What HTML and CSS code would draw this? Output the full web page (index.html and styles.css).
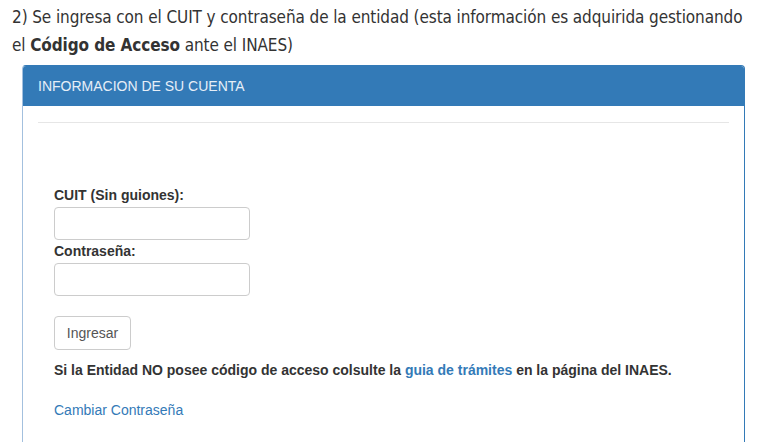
FILE: index.html
```html
<!DOCTYPE html>
<html lang="es">
<head>
<meta charset="utf-8">
<link rel="stylesheet" href="styles.css">
</head>
<body>
<p class="intro">2) Se ingresa con el CUIT y contraseña de la entidad (esta información es adquirida gestionando el <b>Código de Acceso</b> ante el INAES)</p>
<div class="panel">
  <div class="panel-heading">INFORMACION DE SU CUENTA</div>
  <div class="panel-body">
    <hr class="sep">
    <form class="form">
      <label class="lbl">CUIT (Sin guiones):</label>
      <input class="inp" type="text">
      <label class="lbl">Contraseña:</label>
      <input class="inp" type="password">
      <button class="btn" type="button">Ingresar</button>
    </form>
    <p class="note">Si la Entidad NO posee código de acceso colsulte la <a href="#">guia de trámites</a> en la página del INAES.</p>
    <a class="change" href="#">Cambiar Contraseña</a>
  </div>
</div>
</body>
</html>
```
FILE: styles.css
```css
html, body { margin: 0; padding: 0; background: #fff; }
body { padding: 0 0 0 12px; }
.intro {
  margin: 3px 0 6px 0;
  font-family: "DejaVu Sans Condensed", "Liberation Sans", sans-serif;
  font-stretch: condensed;
  font-size: 17px;
  letter-spacing: -0.1px;
  line-height: 28px;
  color: #333;
  width: 740px;
}
.intro b { font-weight: 700; }
.panel {
  margin-left: 10px;
  width: 721px;
  border: 1px solid #337ab7;
  border-left-color: #a3c0de;
  border-radius: 4px;
  font-family: "Liberation Sans", Arial, sans-serif;
  overflow: hidden;
}
.panel-heading {
  background: #337ab7;
  color: #e6eef7;
  font-size: 14px;
  height: 40px;
  line-height: 40px;
  padding-left: 15px;
}
.panel-body { padding: 0 15px 40px 15px; }
.sep { border: 0; border-top: 1px solid #e6e6e6; margin: 16px 0 0 0; }
.form { display: flex; flex-direction: column; align-items: flex-start; padding: 0 16px; margin-top: 64px; }
.lbl { font-weight: 700; font-size: 14px; color: #333; margin-bottom: 3px; line-height: 17px; }
.inp {
  width: 196px; height: 33px; box-sizing: border-box;
  border: 1px solid #ccc; border-radius: 4px; margin: 0 0 3px 0; padding: 0;
}
.btn {
  margin-top: 17px;
  width: 77px; height: 34px;
  border: 1px solid #ccc; border-radius: 4px; background: #fff;
  color: #555; font-family: "Liberation Sans", Arial, sans-serif; font-size: 14px;
}
.note { margin: 10px 0 0 16px; font-size: 14px; line-height: 20px; font-weight: 700; color: #333; }
.note a { color: #337ab7; text-decoration: none; }
.change { display: block; margin: 20px 0 0 16px; font-size: 14px; line-height: 20px; color: #337ab7; text-decoration: none; }
```
